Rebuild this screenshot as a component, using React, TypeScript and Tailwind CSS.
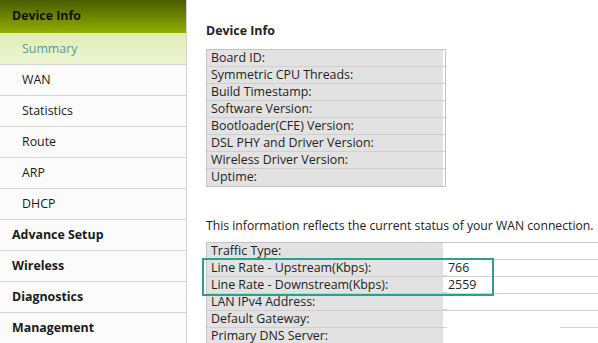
const menu = [
  { label: "Device Info", kind: "head" },
  { label: "Summary", kind: "active" },
  { label: "WAN", kind: "sub" },
  { label: "Statistics", kind: "sub" },
  { label: "Route", kind: "sub" },
  { label: "ARP", kind: "sub" },
  { label: "DHCP", kind: "sub" },
  { label: "Advance Setup", kind: "top" },
  { label: "Wireless", kind: "top" },
  { label: "Diagnostics", kind: "top" },
  { label: "Management", kind: "top" },
]

const deviceRows = [
  "Board ID:",
  "Symmetric CPU Threads:",
  "Build Timestamp:",
  "Software Version:",
  "Bootloader(CFE) Version:",
  "DSL PHY and Driver Version:",
  "Wireless Driver Version:",
  "Uptime:",
]

const wanRows = [
  { label: "Traffic Type:", value: "", line: "full" },
  { label: "Line Rate - Upstream(Kbps):", value: "766", line: "full" },
  { label: "Line Rate - Downstream(Kbps):", value: "2559", line: "full" },
  { label: "LAN IPv4 Address:", value: "", line: "full" },
  { label: "Default Gateway:", value: "", line: "part" },
  { label: "Primary DNS Server:", value: "", line: "part" },
]

function Sidebar() {
  return (
    <div className="w-[187px] shrink-0 border-r border-[#d4d4d4] bg-[#fbfbfb]">
      {menu.map((m) => {
        if (m.kind === "head") {
          return (
            <div key={m.label} className="h-[33px] flex items-center pl-[12px] font-bold text-[12.4px] text-[#111] bg-gradient-to-b from-[#4b5c00] to-[#93b000]">
              {m.label}
            </div>
          )
        }
        if (m.kind === "active") {
          return (
            <div key={m.label} className="h-[32px] flex items-center pl-[22px] pt-[1px] text-[12.4px] text-[#4f9e98] bg-gradient-to-b from-[#e0ecb4] to-[#eef5d4] border-b border-[#d6d6d6]">
              {m.label}
            </div>
          )
        }
        return (
          <div
            key={m.label}
            className={`h-[31px] flex items-center pt-[1px] border-b border-[#d6d6d6] text-[12.4px] text-[#1a1a1a] ${m.kind === "sub" ? "pl-[22px]" : "pl-[12px] font-bold"}`}
          >
            {m.label}
          </div>
        )
      })}
    </div>
  )
}

export default function App() {
  return (
    <div className="w-[598px] h-[343px] overflow-hidden bg-white flex" style={{ fontFamily: '"Open Sans", "Noto Sans", sans-serif' }}>
      <Sidebar />
      <div className="flex-1 pl-[19px] pt-[22px] relative">
        <div className="font-bold text-[12.4px] text-[#222] h-[18px] leading-[18px]">Device Info</div>
        <div className="mt-[9px] w-[240px] border border-[#c4c4c4]">
          {deviceRows.map((r, i) => (
            <div key={r} className={`flex h-[17px] ${i < deviceRows.length - 1 ? "border-b border-[#cfcfcf]" : ""}`}>
              <div className="w-[236px] bg-[#e2e2e2] pl-[4px] text-[12.4px] leading-[16px] text-[#222] whitespace-nowrap">{r}</div>
              <div className="flex-1 bg-white"></div>
            </div>
          ))}
        </div>
        <div className="mt-[30px] text-[12.2px] leading-[18px] text-[#222] whitespace-nowrap">
          This information reflects the current status of your WAN connection.
        </div>
        <div className="mt-[7px] border-t border-l border-[#c4c4c4]">
          {wanRows.map((r) => (
            <div key={r.label} className="flex h-[17px]">
              <div className="w-[236px] bg-[#e2e2e2] border-b border-[#cfcfcf] pl-[4px] text-[12.4px] leading-[16px] text-[#222] whitespace-nowrap">{r.label}</div>
              <div className={`flex-1 flex ${r.line === "full" ? "border-b border-[#d2d2d2]" : ""}`}>
                <div className="w-[4px] border-b border-[#d2d2d2]"></div>
                <div className="flex-1 pl-[1px] text-[12.4px] leading-[16px] text-[#222]">{r.value}</div>
                <div className={`w-[38px] ${r.line === "part" ? "border-b border-[#d2d2d2]" : ""}`}></div>
              </div>
            </div>
          ))}
        </div>
        <div className="absolute left-[15px] top-[258px] w-[292px] h-[38px] border-2 border-[#2e9e8e] pointer-events-none"></div>
      </div>
    </div>
  )
}
